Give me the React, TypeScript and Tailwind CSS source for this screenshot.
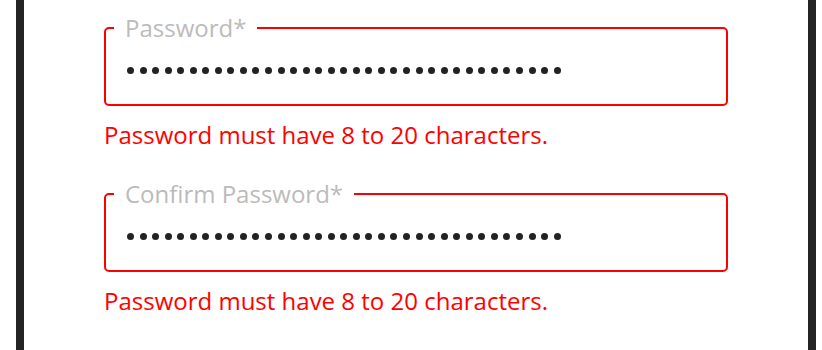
import React from "react";

const fields = [
  { label: "Password*", length: 35 },
  { label: "Confirm Password*", length: 35 },
];

const App = () => {
  return (
    <div
      className="flex h-[350px] w-[822px] bg-white"
      style={{ fontFamily: '"Open Sans", "Noto Sans", sans-serif' }}
    >
      <div className="ml-[16px] flex w-[800px] border-x-[8px] border-[#242424] bg-white">
        <div className="flex w-full flex-col pl-[80px] pt-[13px]">
          {fields.map((field, index) => (
            <div key={index} className="mb-[29px] w-[624px]">
              <fieldset className="rounded-[5px] border-2 border-[#ff0000] px-[8px] pb-[18px]">
                <legend className="px-[11px] text-[24px] leading-[30px] text-[#bbbbbb]">
                  {field.label}
                </legend>
                {/* password dots */}
                <div className="mt-[11px] flex h-[32px] items-center gap-[5.55px] pl-[13px]">
                  {Array.from({ length: field.length }).map((_, i) => (
                    <span
                      key={i}
                      className="block h-[7px] w-[7px] rounded-full bg-[#222222]"
                    />
                  ))}
                </div>
              </fieldset>
              <p className="mt-[14px] text-[24px] leading-[30px] text-[#ff0000]">
                Password must have 8 to 20 characters.
              </p>
            </div>
          ))}
        </div>
      </div>
    </div>
  );
};

export default App;
